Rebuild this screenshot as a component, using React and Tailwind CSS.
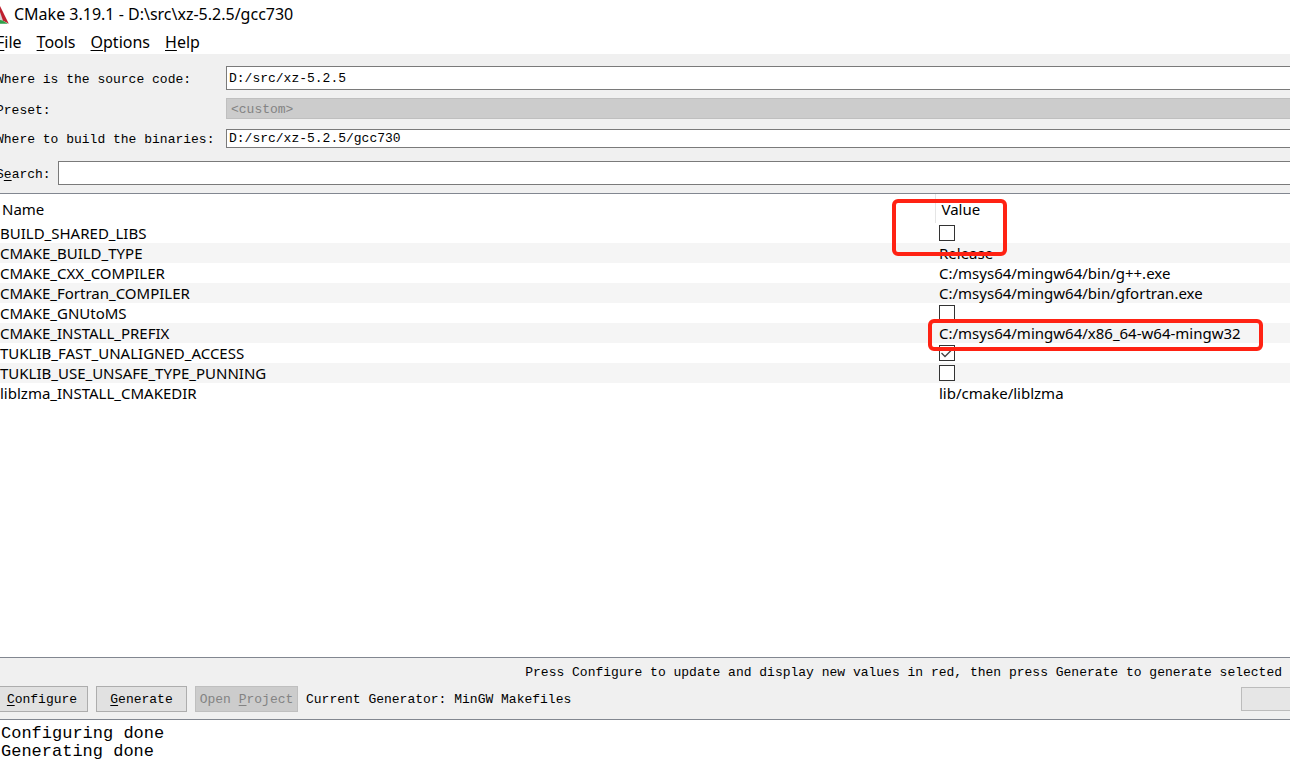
import React, { useState } from "react";

const ENTRIES = [
  { name: "BUILD_SHARED_LIBS", type: "bool", value: false },
  { name: "CMAKE_BUILD_TYPE", type: "string", value: "Release" },
  { name: "CMAKE_CXX_COMPILER", type: "string", value: "C:/msys64/mingw64/bin/g++.exe" },
  { name: "CMAKE_Fortran_COMPILER", type: "string", value: "C:/msys64/mingw64/bin/gfortran.exe" },
  { name: "CMAKE_GNUtoMS", type: "bool", value: false },
  { name: "CMAKE_INSTALL_PREFIX", type: "string", value: "C:/msys64/mingw64/x86_64-w64-mingw32" },
  { name: "TUKLIB_FAST_UNALIGNED_ACCESS", type: "bool", value: true },
  { name: "TUKLIB_USE_UNSAFE_TYPE_PUNNING", type: "bool", value: false },
  { name: "liblzma_INSTALL_CMAKEDIR", type: "string", value: "lib/cmake/liblzma" },
];

const MENUS = ["File", "Tools", "Options", "Help"];

function Mnemonic({ text, at = 0 }) {
  return (
    <span className="whitespace-pre">
      {text.slice(0, at)}
      <span className="underline decoration-1 underline-offset-2">{text[at]}</span>
      {text.slice(at + 1)}
    </span>
  );
}

function Logo() {
  return (
    <svg className="h-5 w-3 shrink-0" viewBox="0 0 12 20" aria-hidden="true">
      <path d="M0 7 L3.5 17 L0 17 Z" fill="#d5d5d8" />
      <path d="M0 2 L8.8 19.8 L3 16.8 L0 8 Z" fill="#be2130" />
      <path d="M0 16 L2.5 16.5 L8 19.8 L0 19.8 Z" fill="#2f9e49" />
    </svg>
  );
}

function Tick({ name, initial }) {
  const [on, setOn] = useState(initial);
  return (
    <span className="grid size-4">
      <input
        type="checkbox"
        aria-label={name}
        checked={on}
        onChange={(e) => setOn(e.target.checked)}
        className="col-start-1 row-start-1 size-4 appearance-none border border-[#333] bg-white"
      />
      {on && (
        <svg className="pointer-events-none col-start-1 row-start-1 size-4" viewBox="0 0 16 16" aria-hidden="true">
          <path d="M2.5 8 L6 11.5 L13 4.5" fill="none" stroke="#444" strokeWidth="1.3" />
        </svg>
      )}
    </span>
  );
}

export default function App() {
  const [source, setSource] = useState("D:/src/xz-5.2.5");
  const [build, setBuild] = useState("D:/src/xz-5.2.5/gcc730");
  const [search, setSearch] = useState("");
  const field = "w-full min-w-0 border border-r-0 border-[#7a7a7a] bg-white px-0.5 pt-px outline-none";
  const label = "whitespace-nowrap pt-[3px] leading-4";

  return (
    <div className="flex min-h-screen flex-col overflow-hidden bg-white font-['Noto_Sans',sans-serif] text-[15px] text-black">
      <header className="text-base">
        <div className="flex h-[30px] items-center gap-0.5 pb-0.5">
          <Logo />
          <h1>CMake 3.19.1 - D:\src\xz-5.2.5/gcc730</h1>
        </div>
        <nav className="-ml-1 flex h-6 items-center gap-[15px]">
          {MENUS.map((m) => (
            <button key={m} type="button">
              <Mnemonic text={m} />
            </button>
          ))}
        </nav>
      </header>

      <form className="bg-[#f0f0f0] pb-2 pt-3 font-['Liberation_Mono',monospace] text-[13px]">
        <div className="-ml-1 grid grid-cols-[222px_1fr] items-center gap-x-2">
          <label htmlFor="source" className={label}>Where is the source code:</label>
          <input id="source" value={source} onChange={(e) => setSource(e.target.value)} className={`${field} h-6`} />
          <label htmlFor="preset" className={label}>Preset:</label>
          <select
            id="preset"
            disabled
            className="mb-2.5 mt-2 h-[21px] w-full appearance-none border border-r-0 border-[#bfbfbf] bg-[#ccc] px-1 pt-px text-[#838383] opacity-100"
          >
            <option>&lt;custom&gt;</option>
          </select>
          <label htmlFor="build" className={label}>Where to build the binaries:</label>
          <input id="build" value={build} onChange={(e) => setBuild(e.target.value)} className={`${field} h-[19px]`} />
        </div>
        <div className="-ml-1 mt-[13px] flex items-center gap-[7px]">
          <label htmlFor="search" className={label}>
            <Mnemonic text="Search:" at={1} />
          </label>
          <input id="search" value={search} onChange={(e) => setSearch(e.target.value)} className={`${field} h-6`} />
        </div>
      </form>

      <main className="relative flex-1 border-y border-[#828790]">
        <table className="w-full table-fixed border-collapse text-left">
          <colgroup>
            <col className="w-[935px]" />
            <col />
          </colgroup>
          <thead>
            <tr className="h-[29px]">
              <th className="border-r border-[#e5e5e5] p-0 pl-0.5 pt-0.5 font-normal">Name</th>
              <th className="p-0 pl-1.5 pt-0.5 font-normal">Value</th>
            </tr>
          </thead>
          <tbody>
            {ENTRIES.map((e) => (
              <tr key={e.name} className="h-5 leading-5 even:bg-[#f5f5f5]">
                <td className="p-0">{e.name}</td>
                <td className="p-0 pl-1">
                  {e.type === "bool" ? <Tick name={e.name} initial={e.value} /> : e.value}
                </td>
              </tr>
            ))}
          </tbody>
        </table>
        <div className="pointer-events-none absolute left-[892px] top-[5px] h-[57px] w-[115px] rounded-md border-4 border-[#ff2213]" />
        <div className="pointer-events-none absolute left-[928px] top-[125px] h-8 w-[335px] rounded-md border-4 border-[#ff2213]" />
      </main>

      <section className="border-b border-[#828790] bg-[#f0f0f0] pb-[7px] font-['Liberation_Mono',monospace] text-[13px]">
        <p className="h-7 whitespace-nowrap pr-2 pt-px text-right leading-7">
          Press Configure to update and display new values in red, then press Generate to generate selected
        </p>
        <div className="-ml-1 flex items-center gap-2">
          <button type="button" className="h-[26px] w-[92px] border border-[#adadad] bg-[#e1e1e1] pt-0.5">
            <Mnemonic text="Configure" />
          </button>
          <button type="button" className="h-[26px] w-[91px] border border-[#adadad] bg-[#e1e1e1] pt-0.5">
            <Mnemonic text="Generate" />
          </button>
          <button type="button" disabled className="h-[26px] w-[103px] border border-[#bfbfbf] bg-[#ccc] pt-0.5 text-[#838383]">
            <Mnemonic text="Open Project" at={5} />
          </button>
          <span className="whitespace-nowrap pt-0.5">Current Generator: MinGW Makefiles</span>
          <div
            role="progressbar"
            aria-label="Progress"
            aria-valuenow={0}
            className="ml-auto h-6 w-[49px] border border-r-0 border-[#bcbcbc] bg-[#e6e6e6]"
          />
        </div>
      </section>

      <output className="block h-[62px] whitespace-pre pl-px pt-[5px] font-['Liberation_Mono',monospace] text-[17px] leading-[18px]">
        {"Configuring done\nGenerating done"}
      </output>
    </div>
  );
}
